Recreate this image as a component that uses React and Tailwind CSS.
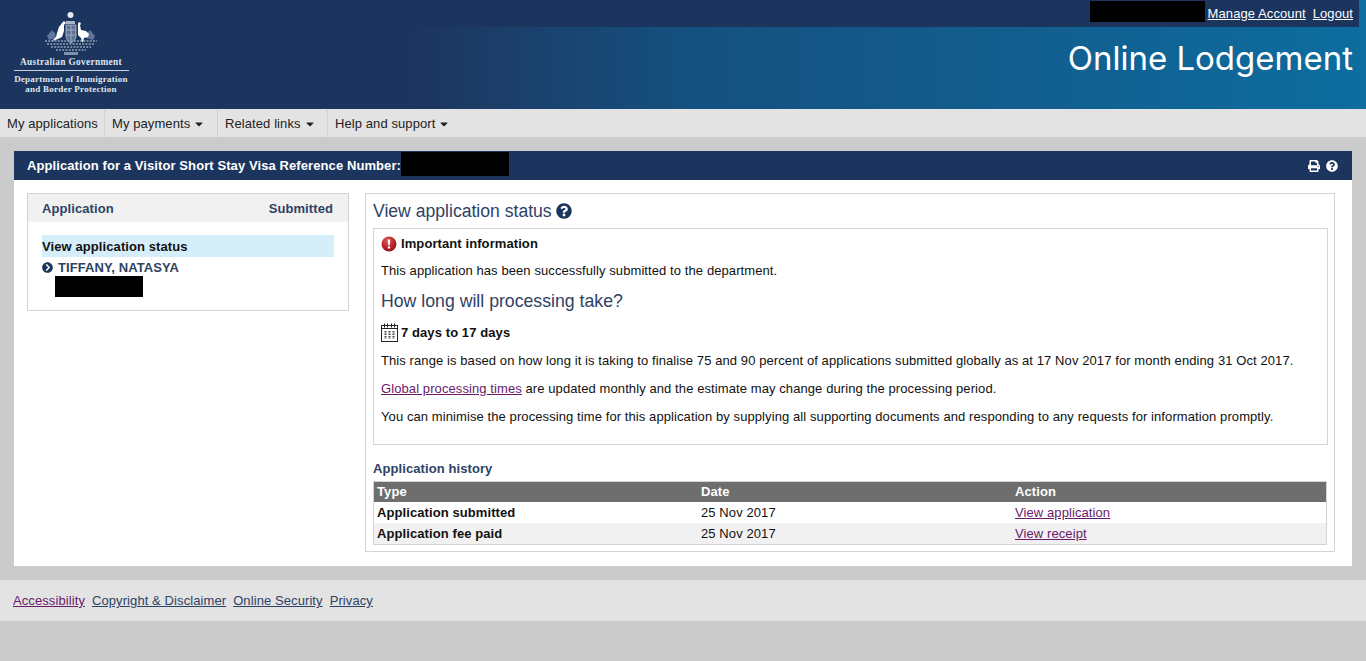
import React from "react";
import { FaPrint, FaQuestionCircle, FaChevronCircleRight, FaCaretDown } from "react-icons/fa";

function Crest() {
  return (
    <svg width="58" height="44" viewBox="0 0 58 44" fill="none" className="mb-[2px]">
      {/* wreath */}
      <path d="M3 30h52M5 33h48M9 36h40M14 39h30" stroke="#93a3bb" strokeWidth="1.600" strokeDasharray="2 1.200" />
      <path d="M5 25l5-6 3 3 1 5-7 2zM53 25l-5-6-3 3-1 5 7 2z" fill="#5f7599" />
      <path d="M22 41h14v3H22z" fill="#7f90ab" />
      {/* star */}
      <circle cx="28.500" cy="4" r="3" fill="#e6ebf2" />
      <path d="M24 10h9v3h-9z" fill="#a9b6ca" />
      {/* shield */}
      <path d="M24 14h10v11c0 3-2 5-5 7-3-2-5-4-5-7z" fill="#5f7395" stroke="#b9c4d4" strokeWidth=".8" />
      <path d="M29 14v17M24 19h10M24 24h10" stroke="#b9c4d4" strokeWidth=".7" />
      {/* kangaroo */}
      <path d="M22 10l2 2-2 2v6l-2 6-4 2-6 2 4-4 1-4 2-6 3-4z" fill="#fff" />
      {/* emu */}
      <path d="M36 12l2-1 1 2-1 1 1 5 5 1 3 3-1 3-4 1-1 4h-1l-1-4-3-3v-6z" fill="#fff" />
    </svg>
  );
}

function CalendarIcon() {
  return (
    <svg width="18" height="19" viewBox="0 0 18 19" fill="none" stroke="#222" strokeWidth="1">
      <rect x=".5" y="2.500" width="16" height="16" />
      <path d="M3.500 .5v4M6.500 .5v4M10.500 .5v4M13.500 .5v4" />
      <path d="M1 5.500h15" />
      <path d="M4.500 8v8M8.500 8v8M12.500 8v8" stroke="#444" strokeWidth="2" strokeDasharray="1.500 1" />
    </svg>
  );
}

function AlertIcon() {
  return (
    <svg width="16" height="16" viewBox="0 0 16 16">
      <defs>
        <radialGradient id="alertBall" cx="40%" cy="30%" r="75%">
          <stop offset="0%" stopColor="#e0605f" />
          <stop offset="60%" stopColor="#b82228" />
          <stop offset="100%" stopColor="#8c1418" />
        </radialGradient>
      </defs>
      <circle cx="8" cy="8" r="7.500" fill="url(#alertBall)" />
      <path d="M6.800 3.500h2.400l-.5 6H7.300z" fill="#fff" />
      <circle cx="8" cy="11.500" r="1.200" fill="#fff" />
    </svg>
  );
}

function MenuItem({ label, className }) {
  return (
    <div className={`flex items-center gap-[3px] border-r border-[#d0d0d0] ${className}`}>
      {label}
      <FaCaretDown className="text-[12px] text-[#222]" />
    </div>
  );
}

function App() {
  return (
    <div className="min-h-[661px] bg-[#cbcbcb] font-['Liberation_Sans',Arial,sans-serif] text-[13px] tracking-[0.09px] text-[#111]">
      {/* header */}
      <div className="flex h-[109px] bg-gradient-to-r from-[#1c355e] from-30% via-[#14507f] via-50% to-[#0c6d9f]">
        <div className="flex w-[140px] flex-col items-center pl-[2px] pt-[11px] font-['Liberation_Serif',serif] font-bold text-[#dfe5ee]">
          <Crest />
          <div className="w-[115px] border-b border-[#c7d0de] pb-[2px] text-center text-[9.300px] leading-[11px] tracking-[0.35px]">Australian Government</div>
          <div className="mt-[3px] w-[120px] text-center text-[9px] leading-[10px] tracking-[0.25px]">
            Department of Immigration
            <br />
            and Border Protection
          </div>
        </div>
        <div className="flex-1">
          <div className="mr-[7px] flex h-[27px] items-start justify-end bg-[#1c355e] pr-[6px] pt-[1px] text-white">
            <div className="h-[21px] w-[115px] bg-black" />
            <a className="ml-[3px] mt-[5px] leading-[15px] underline">Manage Account</a>
            <a className="ml-[7px] mt-[5px] leading-[15px] underline">Logout</a>
          </div>
          <div className="pr-[13px] pt-[10px] text-right font-['Inter',sans-serif] text-[33px] font-normal leading-[42px] tracking-normal text-white">Online Lodgement</div>
        </div>
      </div>

      {/* menu */}
      <div className="flex h-[28px] items-stretch bg-[#e3e3e3] pt-[1px] text-[#222]">
        <div className="flex w-[105px] items-center border-r border-[#d0d0d0] pl-[7px]">My applications</div>
        <MenuItem label="My payments" className="w-[113px] pl-[7px]" />
        <MenuItem label="Related links" className="w-[110px] pl-[7px]" />
        <div className="flex items-center gap-[3px] pl-[7px]">
          Help and support
          <FaCaretDown className="text-[12px] text-[#222]" />
        </div>
      </div>

      {/* main panel */}
      <div className="mx-[14px] mt-[14px] bg-white">
        <div className="flex h-[29px] items-center justify-between bg-[#1c355e] pl-[13px] pr-[14px] font-bold text-white">
          <div className="flex items-center">
            Application for a Visitor Short Stay Visa Reference Number:
            <div className="mb-[3px] h-[24px] w-[108px] bg-black" />
          </div>
          <div className="flex items-center gap-[6px] text-[12px]">
            <FaPrint />
            <FaQuestionCircle />
          </div>
        </div>

        <div className="flex items-start gap-[16px] pb-[14px] pl-[13px] pr-[17px] pt-[13px]">
          {/* left card */}
          <div className="h-[118px] w-[322px] shrink-0 border border-[#d4d4d4]">
            <div className="flex h-[28px] items-center justify-between bg-[#f1f1f1] pl-[14px] pr-[15px] pt-[1px] font-bold text-[#2e4265]">
              <span>Application</span>
              <span>Submitted</span>
            </div>
            <div className="px-[14px] pt-[13px]">
              <div className="flex h-[22px] items-center bg-[#d6edfa] pt-[1px] font-bold text-[#111]">View application status</div>
              <div className="mt-[1px] flex h-[18px] items-center gap-[5px] pt-[1px] font-bold text-[#2e4265]">
                <FaChevronCircleRight className="text-[11px] text-[#1c355e]" />
                TIFFANY, NATASYA
              </div>
              <div className="ml-[13px] h-[21px] w-[88px] bg-black" />
            </div>
          </div>

          {/* right card */}
          <div className="h-[359px] flex-1 border border-[#d4d4d4] pl-[7px] pr-[6px]">
            <div className="flex h-[34px] items-center gap-[4px] text-[17.600px] tracking-normal text-[#2e4265]">
              View application status
              <FaQuestionCircle className="text-[16px] text-[#1c355e]" />
            </div>
            <div className="h-[217px] w-[955px] border border-[#d4d4d4] px-[7px]">
              <div className="flex h-[29px] items-center gap-[4px] font-bold">
                <AlertIcon />
                Important information
              </div>
              <p className="mt-[5px] leading-[16px]">This application has been successfully submitted to the department.</p>
              <h3 className="mt-[11px] text-[17.700px] leading-[22px] tracking-normal text-[#2e4265]">How long will processing take?</h3>
              <div className="mt-[10px] flex h-[21px] items-center gap-[2px] font-bold">
                <CalendarIcon />
                7 days to 17 days
              </div>
              <p className="mt-[10px] leading-[16px]">This range is based on how long it is taking to finalise 75 and 90 percent of applications submitted globally as at 17 Nov 2017 for month ending 31 Oct 2017.</p>
              <p className="mt-[12px] leading-[16px]">
                <a className="text-[#6a1a6b] underline">Global processing times</a> are updated monthly and the estimate may change during the processing period.
              </p>
              <p className="mt-[12px] leading-[16px]">You can minimise the processing time for this application by supplying all supporting documents and responding to any requests for information promptly.</p>
            </div>
            <div className="mt-[15px] h-[17px] font-bold leading-[17px] text-[#2e4265]">Application history</div>
            <div className="mt-[4px] w-[954px] border border-[#d4d4d4]">
              <div className="grid h-[20px] grid-cols-[324px_314px_1fr] items-center bg-[#6e6e6e] pl-[3px] font-bold text-white">
                <span>Type</span>
                <span>Date</span>
                <span>Action</span>
              </div>
              <div className="grid h-[21px] grid-cols-[324px_314px_1fr] items-center bg-white pl-[3px]">
                <span className="font-bold">Application submitted</span>
                <span>25 Nov 2017</span>
                <a className="text-[#6a1a6b] underline">View application</a>
              </div>
              <div className="grid h-[21px] grid-cols-[324px_314px_1fr] items-center bg-[#f1f1f1] pl-[3px]">
                <span className="font-bold">Application fee paid</span>
                <span>25 Nov 2017</span>
                <a className="text-[#6a1a6b] underline">View receipt</a>
              </div>
            </div>
          </div>
        </div>
      </div>

      {/* footer */}
      <div className="mt-[14px] flex h-[41px] items-center gap-[7px] bg-[#e3e3e3] pl-[13px] pt-[1px] text-[#2e4265]">
        <a className="text-[#6a1a6b] underline">Accessibility</a>
        <a className="underline">Copyright &amp; Disclaimer</a>
        <a className="underline">Online Security</a>
        <a className="underline">Privacy</a>
      </div>
    </div>
  );
}

export default App;
